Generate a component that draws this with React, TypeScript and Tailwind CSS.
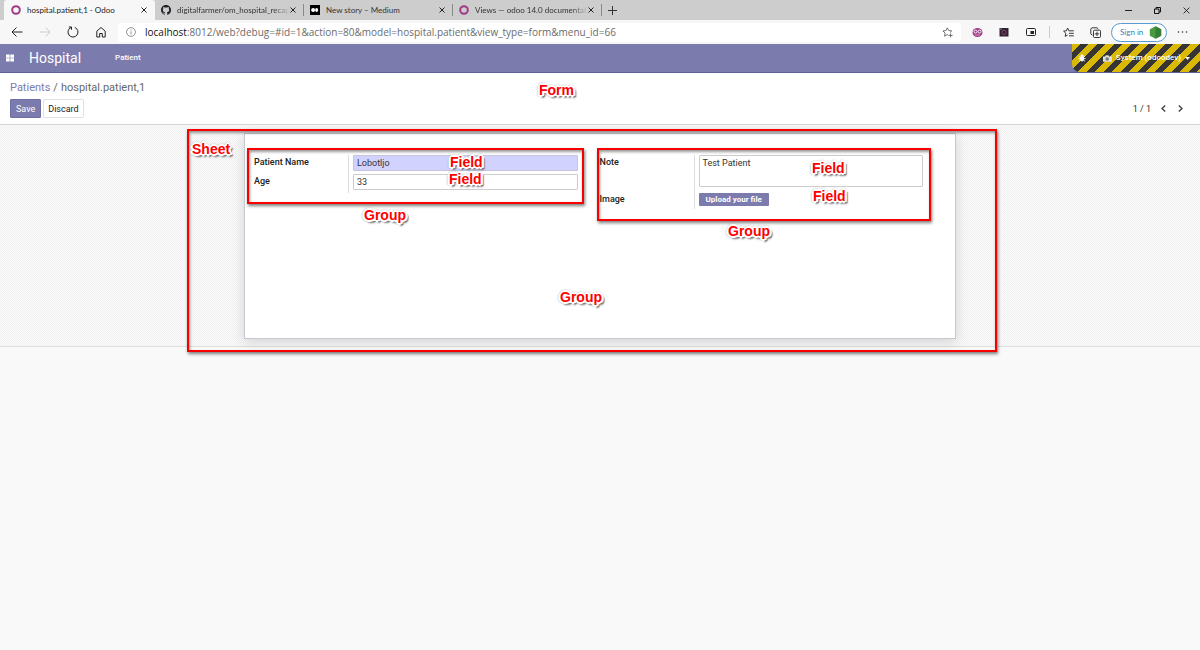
import React from "react";

const appFont = "font-['Roboto',sans-serif]";
const chromeFont = "font-['Lato',sans-serif]";

function OdooRing() {
  return (
    <svg className="size-[10px] shrink-0" viewBox="0 0 10 10" fill="none">
      <circle cx="5" cy="5" r="3.8" stroke="#a03a86" strokeWidth="2" />
    </svg>
  );
}

function GithubMark() {
  return (
    <svg className="size-[10px] shrink-0" viewBox="0 0 16 16" fill="#1b1f23">
      <path d="M8 0C3.58 0 0 3.58 0 8c0 3.54 2.29 6.53 5.47 7.59.4.07.55-.17.55-.38 0-.19-.01-.82-.01-1.49-2.01.37-2.53-.49-2.69-.94-.09-.23-.48-.94-.82-1.13-.28-.15-.68-.52-.01-.53.63-.01 1.08.58 1.23.82.72 1.21 1.87.87 2.33.66.07-.52.28-.87.51-1.07-1.78-.2-3.64-.89-3.64-3.95 0-.87.31-1.59.82-2.15-.08-.2-.36-1.02.08-2.12 0 0 .67-.21 2.2.82.64-.18 1.32-.27 2-.27s1.36.09 2 .27c1.53-1.04 2.2-.82 2.2-.82.44 1.1.16 1.92.08 2.12.51.56.82 1.27.82 2.15 0 3.07-1.87 3.75-3.65 3.95.29.25.54.73.54 1.48 0 1.07-.01 1.93-.01 2.2 0 .21.15.46.55.38A8.01 8.01 0 0 0 16 8c0-4.42-3.58-8-8-8z" />
    </svg>
  );
}

function MediumMark() {
  return (
    <svg className="size-[10px] shrink-0" viewBox="0 0 10 10">
      <rect width="10" height="10" fill="#000" />
      <circle cx="3.1" cy="5" r="2" fill="#fff" />
      <ellipse cx="6.6" cy="5" rx="1.5" ry="2" fill="#fff" />
    </svg>
  );
}

function Cross({ label, big = false }: { label: string; big?: boolean }) {
  return (
    <button aria-label={label} className="flex shrink-0 items-center justify-center">
      <svg className={big ? "size-[7px]" : "size-[6px]"} viewBox="0 0 6 6" stroke="#222" strokeWidth={big ? 0.8 : 1}>
        <path d="M0.5 0.5L5.5 5.5M5.5 0.5L0.5 5.5" />
      </svg>
    </button>
  );
}

function Tab({ icon, title, active = false, fade = false }: { icon: React.ReactNode; title: string; active?: boolean; fade?: boolean }) {
  return (
    <div className={`flex h-5 items-center ${active ? "w-[151px] rounded-t-[3px] bg-[#f7f7f7] pr-2 pl-[7px]" : "w-[149px] pl-[6px]"}`}>
      {icon}
      <span
        className={`ml-[6px] flex-1 text-[8px] leading-3 whitespace-nowrap ${active ? "text-[#222]" : "text-[#333]"} ${
          fade ? "[mask-image:linear-gradient(to_right,black_85%,transparent_100%)]" : ""
        }`}
      >
        {title}
      </span>
      <Cross label={`Close ${title}`} />
      {!active && <span className="ml-[7px] h-3 w-px bg-[#8a8a8a]" />}
    </div>
  );
}

function IconButton({ label, children }: { label: string; children: React.ReactNode }) {
  return (
    <button aria-label={label} className="flex size-4 items-center justify-center">
      {children}
    </button>
  );
}

function TabStrip() {
  return (
    <div className="flex h-5 items-center bg-[#cdcdcd] pl-1">
      <Tab active icon={<OdooRing />} title="hospital.patient,1 - Odoo" />
      <Tab fade icon={<GithubMark />} title="digitalfarmer/om_hospital_recap" />
      <Tab icon={<MediumMark />} title="New story – Medium" />
      <Tab fade icon={<OdooRing />} title="Views — odoo 14.0 documentat" />
      <button aria-label="New tab" className="ml-[6px]">
        <svg className="size-[9px]" viewBox="0 0 9 9" stroke="#333" strokeWidth="1">
          <path d="M4.5 0V9M0 4.5H9" />
        </svg>
      </button>
      <div className="ml-auto flex items-center gap-[22px] pr-[10px]">
        <button aria-label="Minimize">
          <svg className="size-[7px]" viewBox="0 0 7 7" stroke="#222"><path d="M0 3.5H7" /></svg>
        </button>
        <button aria-label="Restore">
          <svg className="size-[7px]" viewBox="0 0 7 7" stroke="#111" fill="none"><path d="M0.5 2H5V6.5H0.5ZM2 2V0.5H6.5V5H5" /></svg>
        </button>
        <Cross big label="Close window" />
      </div>
    </div>
  );
}

function AddressBar() {
  return (
    <div className="flex h-6 items-center bg-[#f7f7f7] pr-3 pl-[9px]">
      <div className="flex items-center gap-3">
        <IconButton label="Back">
          <svg className="size-3" viewBox="0 0 12 12" fill="none" stroke="#222"><path d="M11.5 6H1M5.5 1.5L1 6L5.5 10.5" /></svg>
        </IconButton>
        <IconButton label="Forward">
          <svg className="size-3" viewBox="0 0 12 12" fill="none" stroke="#ccc"><path d="M0.5 6H11M6.5 1.5L11 6L6.5 10.5" /></svg>
        </IconButton>
        <IconButton label="Reload">
          <svg className="size-3" viewBox="0 0 12 12" fill="none" stroke="#222"><path d="M7.8 1.4A5 5 0 1 1 4.2 1.4M1.8 1H4.5V3.7" /></svg>
        </IconButton>
        <IconButton label="Home">
          <svg className="size-3" viewBox="0 0 12 12" fill="none" stroke="#222"><path d="M1.8 5.2L6 1.5L10.2 5.2V11H7.3V7.5H4.7V11H1.8Z" /></svg>
        </IconButton>
      </div>
      <div className="ml-[9px] flex h-[19px] flex-1 items-center rounded-[3px] bg-white pr-2 pl-2">
        <svg className="size-[10px] shrink-0" viewBox="0 0 10 10" fill="none" stroke="#777" strokeWidth="0.8">
          <circle cx="5" cy="5" r="4.4" />
          <path d="M5 4.3V7.5M5 2.4V3.4" />
        </svg>
        <span className="ml-[9px] flex-1 font-['Open_Sans',sans-serif] text-[10px] leading-4 whitespace-nowrap text-[#6c6c6c]">
          <span className="text-[#111]">localhost</span>:8012/web?debug=#id=1&amp;action=80&amp;model=hospital.patient&amp;view_type=form&amp;menu_id=66
        </span>
        <button aria-label="Add to favorites">
          <svg className="size-[11px]" viewBox="0 0 12 12" fill="none" stroke="#555" strokeWidth="0.9">
            <path d="M7 9L5.8 8.3L2.8 10L3.4 6.6L1 4.3L4.3 3.9L5.8 0.9L7.3 3.9L10.6 4.3L8.8 6M9.4 7V11.4M7.2 9.2H11.6" />
          </svg>
        </button>
      </div>
      <div className="ml-2 flex items-center gap-[11px]">
        <IconButton label="Odoo extension">
          <svg className="size-[11px]" viewBox="0 0 11 11">
            <ellipse cx="5.5" cy="5.5" rx="5" ry="4.5" fill="#a03a86" />
            <circle cx="3.5" cy="4.6" r="1.5" fill="none" stroke="#fff" strokeWidth="0.9" />
            <circle cx="7.5" cy="4.6" r="1.5" fill="none" stroke="#fff" strokeWidth="0.9" />
            <path d="M2.8 8H8.2" stroke="#e5bcd8" strokeWidth="0.7" />
          </svg>
        </IconButton>
        <IconButton label="Capture extension">
          <svg className="size-[10px]" viewBox="0 0 10 10">
            <rect x="0.5" y="1" width="9" height="8.5" fill="#2c2430" />
            <circle cx="5" cy="5.4" r="2.1" fill="none" stroke="#a03a78" strokeWidth="1" />
            <rect x="1" y="1.6" width="2" height="1" fill="#888" />
          </svg>
        </IconButton>
        <IconButton label="Picture in picture">
          <svg className="size-[10px]" viewBox="0 0 10 10" fill="none" stroke="#222">
            <rect x="0.5" y="1.5" width="9" height="7" rx="1" />
            <rect x="5" y="4.5" width="2.5" height="2" fill="#222" />
          </svg>
        </IconButton>
      </div>
      <span className="ml-[10px] h-3 w-px bg-[#ccc]" />
      <div className="ml-[10px] flex items-center gap-[11px]">
        <IconButton label="Favorites">
          <svg className="size-[11px]" viewBox="0 0 11 11" fill="none" stroke="#222" strokeWidth="0.9">
            <path d="M10.8 3.8H5.8L4.6 1L3.4 3.8L0.6 4.1L2.8 6.2L2.2 9.4L4.6 8M6 6.3H10.8M6 8.8H10.8" />
          </svg>
        </IconButton>
        <IconButton label="Collections">
          <svg className="size-[11px]" viewBox="0 0 11 11" fill="none" stroke="#222" strokeWidth="0.9">
            <rect x="3.5" y="3.2" width="7" height="7.3" rx="1" />
            <path d="M2.5 8.2L0.8 7V2L1.8 0.8H7L8.3 2M7 4.7V9M4.9 6.9H9.1" />
          </svg>
        </IconButton>
      </div>
      <button className="ml-2 flex h-[19px] w-14 items-center rounded-full border border-[#5b9bd0] bg-white pr-1 pl-2 text-[8px] text-[#2d7fc4]">
        Sign in
        <svg className="ml-auto size-[13px]" viewBox="0 0 13 13">
          <path d="M6.5 0.3L12.2 3.3V9.7L6.5 12.7L0.8 9.7V3.3Z" fill="#4b9a3f" />
          <path d="M6.5 0.3L12.2 3.3V9.7L6.5 12.7Z" fill="#358035" />
        </svg>
      </button>
      <button aria-label="Settings and more" className="ml-[10px]">
        <svg className="h-1 w-[11px]" viewBox="0 0 11 4" fill="#333">
          <circle cx="1.5" cy="2" r="0.8" /><circle cx="5.5" cy="2" r="0.8" /><circle cx="9.5" cy="2" r="0.8" />
        </svg>
      </button>
    </div>
  );
}

function Navbar() {
  return (
    <nav className="flex h-[29px] items-center border-b border-[#5f5e97] bg-[#7c7bad] text-white">
      <button aria-label="Applications" className="ml-[6px]">
        <svg className="size-2" viewBox="0 0 8 8" fill="#fff">
          <path d="M0 0.5H3.7V3.7H0ZM4.3 0.5H8V3.7H4.3ZM0 4.3H3.7V7.5H0ZM4.3 4.3H8V7.5H4.3Z" />
        </svg>
      </button>
      <a href="#hospital" className="ml-[15px] text-[14px] leading-5">Hospital</a>
      <a href="#patient" className="ml-[34px] text-[8px] leading-3 font-medium">Patient</a>
      <div className="ml-auto flex h-7 w-32 items-center rounded-bl-[8px] bg-[repeating-linear-gradient(135deg,#d9b904_0px,#d9b904_6px,#373435_6px,#373435_12px)] pr-[10px] pl-[6px]">
        <button aria-label="Open developer tools">
          <svg className="size-2" viewBox="0 0 8 8" fill="#fff" stroke="#fff" strokeWidth="0.8">
            <ellipse cx="4" cy="4.6" rx="1.8" ry="2.5" />
            <path d="M2.8 2A1.2 1.2 0 0 1 5.2 2ZM0.3 4.6H7.7M0.8 2L2.5 3.5M7.2 2L5.5 3.5M1 7.4L2.5 6M7 7.4L5.5 6" />
          </svg>
        </button>
        <button className="ml-auto flex items-center text-[8px] leading-3 font-medium whitespace-nowrap">
          <svg className="mr-1 h-[7px] w-[9px]" viewBox="0 0 9 7" fill="#ddd">
            <path d="M0 1.4H2L2.8 0.3H5.4L6.2 1.4H9V6.8H0Z" />
            <circle cx="4.2" cy="4" r="1.7" fill="#777" />
          </svg>
          System (odoodev)
          <svg className="ml-1 h-[3px] w-[5px]" viewBox="0 0 5 3" fill="#fff"><path d="M0 0H5L2.5 3Z" /></svg>
        </button>
      </div>
    </nav>
  );
}

function ControlPanel() {
  return (
    <header className="border-b border-[#d5d5d5] bg-white px-[10px] pt-[7px] pb-[6px]">
      <div className="text-[11px] leading-4 text-[#666]">
        <a href="#patients" className="text-[#7c7bad]">Patients</a>
        <span className="px-[3px]">/</span>
        <span>hospital.patient,1</span>
      </div>
      <div className="mt-[3px] flex items-center">
        <button className="h-[19px] rounded-[1px] border border-[#6f6ea3] bg-[#7c7bad] px-[5px] text-[9px] leading-3 text-white">Save</button>
        <button className="ml-[2px] h-[19px] rounded-[1px] border border-[#dee2e6] bg-white px-1 text-[9px] leading-3 text-[#222]">Discard</button>
        <div className="ml-auto flex items-center text-[9px] leading-3 text-[#333]">
          <span>1 / 1</span>
          <button aria-label="Previous" className="ml-[10px]">
            <svg className="h-[7px] w-[5px]" viewBox="0 0 5 7" fill="none" stroke="#444" strokeWidth="1.4"><path d="M4.2 0.5L1 3.5L4.2 6.5" /></svg>
          </button>
          <button aria-label="Next" className="mr-[7px] ml-3">
            <svg className="h-[7px] w-[5px]" viewBox="0 0 5 7" fill="none" stroke="#444" strokeWidth="1.4"><path d="M0.8 0.5L4 3.5L0.8 6.5" /></svg>
          </button>
        </div>
      </div>
    </header>
  );
}

const labelClass = "text-[9px] leading-3 font-medium text-[#222]";
const inputClass = "block w-full rounded-[1px] border px-[3px] text-[9px] text-[#333]";

function Mark({ text, at }: { text: string; at: string }) {
  return (
    <span
      className={`pointer-events-none absolute z-20 font-['Liberation_Sans',Arial,sans-serif] text-[14px] leading-4 font-bold text-[#f00] [text-shadow:1px_0_#fff,-1px_0_#fff,0_1px_#fff,0_-1px_#fff,1px_1px_#fff,-1px_-1px_#fff,1px_-1px_#fff,-1px_1px_#fff,2px_0_#fff,-2px_0_#fff,0_2px_#fff,0_-2px_#fff,2px_1px_#fff,-2px_1px_#fff,3px_2px_1px_#777,2px_3px_2px_#666,-2px_1px_2px_#999,-1px_-1px_2px_#bbb,0_-2px_2px_#bbb] ${at}`}
    >
      {text}
    </span>
  );
}

function Outline({ at }: { at: string }) {
  return (
    <div
      className={`pointer-events-none absolute z-10 border-2 border-[#f80000] shadow-[1px_2px_3px_rgba(0,0,0,0.5),inset_1px_2px_3px_rgba(0,0,0,0.4)] ${at}`}
    />
  );
}

function Sheet() {
  return (
    <section className="border-b border-[#ddd] bg-[#fbfbfb] bg-[conic-gradient(#f0f0f0_25%,transparent_0_50%,#f0f0f0_0_75%,transparent_0)] bg-[length:2px_2px] pt-2 pb-[7px]">
      <div className="relative mx-auto w-full max-w-[712px]">
        <div className="grid min-h-[206px] grid-cols-2 content-start gap-x-[22px] border border-[#c8c8d3] bg-white pt-[21px] pr-[32px] pl-[9px] shadow-[0_3px_12px_rgba(0,0,0,0.14)]">
          <div className="grid grid-cols-[95px_1fr] content-start">
            <div className="flex flex-col gap-[7px] border-r border-[#ddd] pt-px pb-[6px]">
              <label htmlFor="name" className={labelClass}>Patient Name</label>
              <label htmlFor="age" className={labelClass}>Age</label>
            </div>
            <div className="flex flex-col gap-[3px] pl-1">
              <input id="name" defaultValue="Lobotljo" className={`${inputClass} h-4 border-[#c4c4dc] bg-[#d2d2ff]`} />
              <input id="age" defaultValue="33" className={`${inputClass} h-4 border-[#ccc] bg-white`} />
            </div>
          </div>
          <div className="grid grid-cols-[95px_1fr] content-start">
            <div className="flex flex-col gap-[25px] border-r border-[#ddd] pt-px pb-1">
              <label htmlFor="note" className={labelClass}>Note</label>
              <label htmlFor="image" className={labelClass}>Image</label>
            </div>
            <div className="flex flex-col items-start gap-[6px] pl-1">
              <textarea id="note" defaultValue="Test Patient" className={`${inputClass} h-8 resize-none border-[#ccc] bg-white pt-[1px] leading-3`} />
              <button id="image" className="h-[13px] rounded-[1px] bg-[#7c7bad] px-[7px] text-[8px] leading-3 font-bold whitespace-nowrap text-white">
                Upload your file
              </button>
            </div>
          </div>
        </div>

        <Outline at="-top-[4px] -left-[57px] h-[223px] w-[810px]" />
        <Outline at="top-[15px] left-[3px] h-[56px] w-[337px]" />
        <Outline at="top-[15px] left-[353px] h-[73px] w-[334px]" />
        <Mark text="Form" at="-top-[51px] left-[295px]" />
        <Mark text="Sheet" at="top-[8px] -left-[52px]" />
        <Mark text="Field" at="top-[21px] left-[206px]" />
        <Mark text="Field" at="top-[38px] left-[205px]" />
        <Mark text="Field" at="top-[27px] left-[568px]" />
        <Mark text="Field" at="top-[55px] left-[569px]" />
        <Mark text="Group" at="top-[74px] left-[120px]" />
        <Mark text="Group" at="top-[90px] left-[484px]" />
        <Mark text="Group" at="top-[156px] left-[316px]" />
      </div>
    </section>
  );
}

export default function App() {
  return (
    <div className="min-h-screen bg-[#f9f9f9]">
      <div className={chromeFont}>
        <TabStrip />
        <AddressBar />
      </div>
      <div className={appFont}>
        <Navbar />
        <ControlPanel />
        <Sheet />
      </div>
    </div>
  );
}
